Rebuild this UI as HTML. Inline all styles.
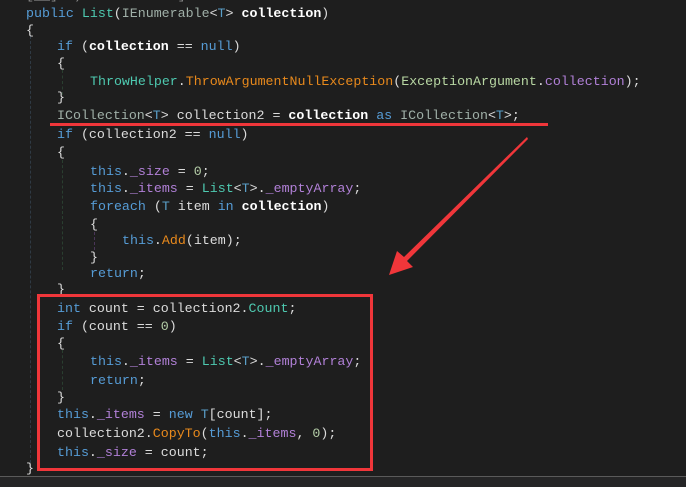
<!DOCTYPE html>
<html><head><meta charset="utf-8"><style>
body{margin:0;width:686px;height:487px;background:#1e1e1e;overflow:hidden;position:relative;font-family:"Liberation Mono",monospace;font-size:13.3px;color:#dcdcdc}
.l{position:absolute;white-space:pre;line-height:18px;height:18px}
.k{color:#569cd6}.t{color:#4ec9b0}.p{color:#5a9fc8}.m{color:#e8891c}.f{color:#b180d7}.n{color:#b5cea8}.e{color:#b8d7a3}.i{color:#a0b0a8}
b{color:#fff}
.g{position:absolute;width:0;border-left:1px dashed #2f3a44}
</style></head><body>
<div class="g" style="left:30px;top:36px;height:432px"></div>
<div class="g" style="left:62px;top:70px;height:25px;border-color:#2a3f30"></div>
<div class="g" style="left:62px;top:160px;height:110px;border-color:#2a3f30"></div>
<div class="g" style="left:94px;top:232px;height:18px;border-color:#4a3558"></div>
<div class="g" style="left:62px;top:350px;height:40px;border-color:#2a3f30"></div>
<div class="l" style="left:26px;top:-13px;color:#888">[__]  )            ]</div>
<div class="l" style="left:26px;top:5px"><span class="k">public</span> <span class="t">List</span>(<span class="i">IEnumerable</span>&lt;<span class="p">T</span>&gt; <b>collection</b>)</div>
<div class="l" style="left:26px;top:22px">{</div>
<div class="l" style="left:57px;top:38px"><span class="k">if</span> (<b>collection</b> == <span class="k">null</span>)</div>
<div class="l" style="left:57px;top:55px">{</div>
<div class="l" style="left:90px;top:73px"><span class="t">ThrowHelper</span>.<span class="m">ThrowArgumentNullException</span>(<span class="e">ExceptionArgument</span>.<span class="f">collection</span>);</div>
<div class="l" style="left:57px;top:89px">}</div>
<div class="l" style="left:57px;top:107px"><span class="i">ICollection</span>&lt;<span class="p">T</span>&gt; collection2 = <b>collection</b> <span class="k">as</span> <span class="i">ICollection</span>&lt;<span class="p">T</span>&gt;;</div>
<div class="l" style="left:57px;top:126px"><span class="k">if</span> (collection2 == <span class="k">null</span>)</div>
<div class="l" style="left:57px;top:144px">{</div>
<div class="l" style="left:90px;top:163px"><span class="k">this</span>.<span class="f">_size</span> = <span class="n">0</span>;</div>
<div class="l" style="left:90px;top:180px"><span class="k">this</span>.<span class="f">_items</span> = <span class="t">List</span>&lt;<span class="p">T</span>&gt;.<span class="f">_emptyArray</span>;</div>
<div class="l" style="left:90px;top:198px"><span class="k">foreach</span> (<span class="p">T</span> item <span class="k">in</span> <b>collection</b>)</div>
<div class="l" style="left:90px;top:216px">{</div>
<div class="l" style="left:122px;top:232px"><span class="k">this</span>.<span class="m">Add</span>(item);</div>
<div class="l" style="left:90px;top:249px">}</div>
<div class="l" style="left:90px;top:265px"><span class="k">return</span>;</div>
<div class="l" style="left:57px;top:281px">}</div>
<div class="l" style="left:57px;top:300px"><span class="k">int</span> count = collection2.<span class="t">Count</span>;</div>
<div class="l" style="left:57px;top:318px"><span class="k">if</span> (count == <span class="n">0</span>)</div>
<div class="l" style="left:57px;top:335px">{</div>
<div class="l" style="left:90px;top:353px"><span class="k">this</span>.<span class="f">_items</span> = <span class="t">List</span>&lt;<span class="p">T</span>&gt;.<span class="f">_emptyArray</span>;</div>
<div class="l" style="left:90px;top:372px"><span class="k">return</span>;</div>
<div class="l" style="left:57px;top:389px">}</div>
<div class="l" style="left:57px;top:406px"><span class="k">this</span>.<span class="f">_items</span> = <span class="k">new</span> <span class="p">T</span>[count];</div>
<div class="l" style="left:57px;top:425px">collection2.<span class="m">CopyTo</span>(<span class="k">this</span>.<span class="f">_items</span>, <span class="n">0</span>);</div>
<div class="l" style="left:57px;top:444px"><span class="k">this</span>.<span class="f">_size</span> = count;</div>
<div class="l" style="left:26px;top:460px">}</div>
<div style="position:absolute;left:0;top:476px;width:686px;height:1px;background:#5a5a5a"></div>
<div style="position:absolute;left:0;top:477px;width:686px;height:10px;background:#252526"></div>
<div style="position:absolute;left:50px;top:123px;width:498px;height:3px;background:#f0363a"></div>
<div style="position:absolute;left:37px;top:294px;width:330px;height:171px;border:3px solid #f0363a"></div>
<svg style="position:absolute;left:0;top:0" width="686" height="487">
<polygon points="527,137 404,257 397,251 389,275 413,267 407,261 528,139" fill="#f0363a"/>
</svg>
</body></html>
